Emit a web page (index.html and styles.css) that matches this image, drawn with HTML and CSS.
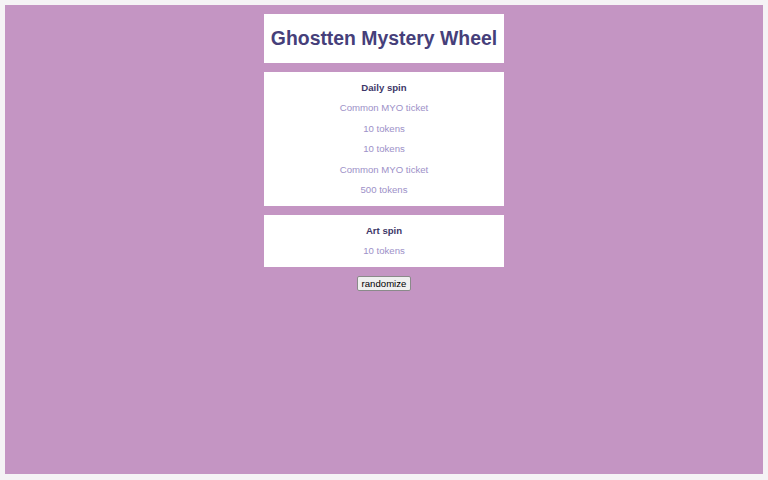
FILE: index.html
```html
<!DOCTYPE html>
<html lang="en">
<head>
    <meta charset="UTF-8">
    <title>Ghostten Mystery Wheel</title>
    <link rel="stylesheet" href="styles.css">
</head>
<body>

<div class="page">
    <div class="wheel">
        <div class="card title-card">
            <h1>Ghostten Mystery Wheel</h1>
        </div>

        <div class="card spin-card">
            <div class="spin-name">Daily spin</div>
            <div class="prize">Common MYO ticket</div>
            <div class="prize">10 tokens</div>
            <div class="prize">10 tokens</div>
            <div class="prize">Common MYO ticket</div>
            <div class="prize">500 tokens</div>
        </div>

        <div class="card spin-card">
            <div class="spin-name">Art spin</div>
            <div class="prize">10 tokens</div>
        </div>

        <button class="randomize-button">randomize</button>
    </div>
</div>

</body>
</html>
```

FILE: styles.css
```css
body {
    margin: 0;
    background-color: #f5f3f5;
    font-family: 'Liberation Sans', Arial, sans-serif;
}
.page {
    margin: 5px 5px 0 5px;
    height: 469px;
    background-color: #c495c3;
    padding-top: 9px;
    box-sizing: border-box;
}
.wheel {
    width: 240px;
    margin: 0 auto;
    display: flex;
    flex-direction: column;
    align-items: center;
    gap: 9px;
}
.card {
    width: 100%;
    background-color: white;
    text-align: center;
    box-sizing: border-box;
}
.title-card {
    height: 49px;
    display: flex;
    align-items: center;
    justify-content: center;
}
.title-card h1 {
    margin: 0;
    font-size: 19.4px;
    color: #463f7a;
}
.spin-card {
    padding: 5.5px 0;
    font-size: 9.6px;
    line-height: 20.5px;
}
.spin-name {
    font-weight: bold;
    color: #3e3868;
}
.prize {
    color: #9d91c8;
}
.randomize-button {
    font-family: 'Liberation Sans', Arial, sans-serif;
    font-size: 9.6px;
    line-height: 11px;
    padding: 1px 4px;
    border: 1px solid #8a8a8a;
    border-radius: 2px;
    background-color: #efefef;
    color: black;
}
```
